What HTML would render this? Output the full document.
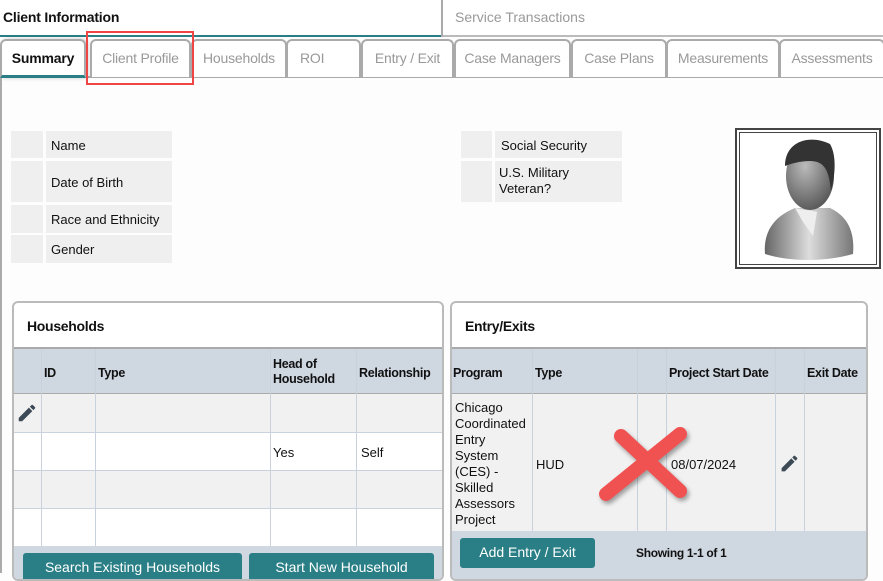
<!DOCTYPE html>
<html><head><meta charset="utf-8"><style>
*{box-sizing:border-box;margin:0;padding:0}
body{width:883px;height:573px;overflow:hidden;background:#fdfdfd;font-family:"Liberation Sans",sans-serif;position:relative;font-size:13px;color:#111}
.a{position:absolute}
.tab{position:absolute;top:39px;height:38px;border:2px solid #aaa;border-bottom:none;border-radius:6px 6px 0 0;color:#999;font-size:14px;line-height:34px;text-align:center;background:#fff;letter-spacing:-.2px}
.g{background:#efefef}
.hd{font-weight:bold;font-size:12.5px;letter-spacing:-.3px}
.btn{position:absolute;background:#2a7f86;color:#fff;font-size:14px;text-align:center;border-radius:3px}
.vl{position:absolute;width:1px;background:#c8d2dd}
</style></head><body>
<div class="a" style="left:0;top:0;width:441px;height:37px;background:#fff;border-bottom:2px solid #2a7f86"></div>
<div class="a" style="left:3px;top:9px;font-weight:bold;font-size:14px;letter-spacing:-.2px">Client Information</div>
<div class="a" style="left:441px;top:0;width:2px;height:37px;background:#aaa"></div>
<div class="a" style="left:443px;top:0;width:440px;height:37px;background:#fff;border-bottom:2px solid #bbb"></div>
<div class="a" style="left:455px;top:9px;color:#999;font-size:14px">Service Transactions</div>
<div class="a" style="left:0;top:76px;width:883px;height:2px;background:#aaa"></div>
<div class="tab" style="left:0;width:86px;color:#111;font-weight:bold;border-bottom:3px solid #2a7f86;height:39px;box-shadow:2px 0 4px rgba(0,0,0,.2)">Summary</div>
<div class="tab" style="left:90px;width:101px">Client Profile</div>
<div class="tab" style="left:191px;width:96px">Households</div>
<div class="tab" style="left:286px;width:75px;text-align:left;padding-left:12px">ROI</div>
<div class="tab" style="left:361px;width:93px">Entry / Exit</div>
<div class="tab" style="left:454px;width:117px">Case Managers</div>
<div class="tab" style="left:571px;width:96px">Case Plans</div>
<div class="tab" style="left:666px;width:114px">Measurements</div>
<div class="tab" style="left:779px;width:106px">Assessments</div>
<div class="a" style="left:86px;top:31px;width:108px;height:54px;border:2px solid #f04545"></div>
<div class="a" style="left:0;top:78px;width:2px;height:495px;background:#aaa"></div>

<div class="a g" style="left:11px;top:131px;width:32px;height:27px"></div><div class="a g" style="left:46px;top:131px;width:126px;height:27px;padding:7px 5px">Name</div>
<div class="a g" style="left:11px;top:161px;width:32px;height:41px"></div><div class="a g" style="left:46px;top:161px;width:126px;height:41px;padding:14px 5px">Date of Birth</div>
<div class="a g" style="left:11px;top:205px;width:32px;height:28px"></div><div class="a g" style="left:46px;top:205px;width:126px;height:28px;padding:7px 5px">Race and Ethnicity</div>
<div class="a g" style="left:11px;top:235px;width:32px;height:28px"></div><div class="a g" style="left:46px;top:235px;width:126px;height:28px;padding:7px 5px">Gender</div>
<div class="a g" style="left:461px;top:131px;width:31px;height:27px"></div><div class="a g" style="left:495px;top:131px;width:127px;height:27px;padding:7px 6px">Social Security</div>
<div class="a g" style="left:461px;top:161px;width:31px;height:41px"></div><div class="a g" style="left:495px;top:161px;width:127px;height:41px;padding:4px 4px;line-height:16px">U.S. Military<br>Veteran?</div>

<div class="a" style="left:735px;top:128px;width:146px;height:141px;border:2px solid #444;background:#fff"><div class="a" style="left:2px;top:2px;right:2px;bottom:2px;border:1px solid #444"></div>
<svg class="a" style="left:18px;top:6px" width="110" height="128" viewBox="0 0 110 128"><defs><radialGradient id="r" cx=".4" cy=".35" r=".7"><stop offset="0" stop-color="#bbb"/><stop offset="1" stop-color="#555"/></radialGradient><linearGradient id="b" x1="0" x2="1"><stop offset="0" stop-color="#666"/><stop offset=".5" stop-color="#ddd"/><stop offset="1" stop-color="#777"/></linearGradient></defs>
<path d="M10 118 C8 95 20 80 40 72 L75 72 C92 80 100 95 98 118 C70 126 35 126 10 118Z" fill="url(#b)"/>
<path d="M40 72 L48 86 L58 100 L62 76Z" fill="#eee"/>
<ellipse cx="55" cy="40" rx="24" ry="34" fill="url(#r)"/>
<path d="M30 30 C30 5 55 -2 75 8 C82 20 80 40 76 55 C74 35 70 25 55 25 C45 25 35 28 30 30Z" fill="#333"/></svg></div>

<!-- households -->
<div class="a" style="left:12px;top:301px;width:432px;height:280px;border:2px solid #bbb;border-radius:6px;background:#fff;overflow:hidden">
<div class="a hd" style="left:13px;top:15px;font-size:14px">Households</div>
<div class="a" style="left:0;top:44px;width:432px;height:2px;background:#aaa"></div>
<div class="a" style="left:0;top:46px;width:432px;height:45px;background:#cfd7e1;border-bottom:1px solid #aaa"></div>
<div class="a" style="left:0;top:91px;width:432px;height:38px;background:#f1f1f1"></div>
<div class="a" style="left:0;top:129px;width:432px;height:38px;background:#fff;border-top:1px solid #c8d2dd"></div>
<div class="a" style="left:0;top:167px;width:432px;height:38px;background:#f1f1f1;border-top:1px solid #c8d2dd"></div>
<div class="a" style="left:0;top:205px;width:432px;height:38px;background:#fff;border-top:1px solid #c8d2dd"></div>
<div class="a" style="left:0;top:243px;width:432px;height:40px;background:#cfd7e1"></div>
<div class="vl" style="left:27px;top:46px;height:197px"></div><div class="vl" style="left:81px;top:46px;height:197px"></div><div class="vl" style="left:256px;top:46px;height:197px"></div><div class="vl" style="left:342px;top:46px;height:197px"></div>
<div class="a hd" style="left:30px;top:63px">ID</div><div class="a hd" style="left:84px;top:63px">Type</div>
<div class="a hd" style="left:259px;top:54px;line-height:15px">Head of<br>Household</div><div class="a hd" style="left:345px;top:63px">Relationship</div>
<svg class="a" style="left:2px;top:99px" width="22" height="22" viewBox="0 0 24 24"><path d="M3 17.25V21h3.75L17.81 9.94l-3.75-3.75L3 17.25zM20.71 7.04a1 1 0 0 0 0-1.41l-2.34-2.34a1 1 0 0 0-1.41 0l-1.83 1.83 3.75 3.75 1.83-1.83z" fill="#3d4a55"/></svg>
<div class="a" style="left:259px;top:142px">Yes</div><div class="a" style="left:347px;top:142px">Self</div>
<div class="btn" style="left:9px;top:250px;width:219px;height:30px;line-height:28px">Search Existing Households</div>
<div class="btn" style="left:235px;top:250px;width:185px;height:30px;line-height:28px">Start New Household</div>
</div>

<!-- entry exits -->
<div class="a" style="left:450px;top:301px;width:418px;height:280px;border:2px solid #bbb;border-radius:6px;background:#fff;overflow:hidden">
<div class="a hd" style="left:13px;top:15px;font-size:14px">Entry/Exits</div>
<div class="a" style="left:0;top:44px;width:418px;height:2px;background:#aaa"></div>
<div class="a" style="left:0;top:46px;width:418px;height:45px;background:#cfd7e1;border-bottom:1px solid #aaa"></div>
<div class="a" style="left:0;top:91px;width:418px;height:137px;background:#f1f1f1"></div>
<div class="a" style="left:0;top:228px;width:418px;height:50px;background:#cfd7e1"></div>
<div class="vl" style="left:80px;top:46px;height:182px"></div><div class="vl" style="left:185px;top:46px;height:182px"></div><div class="vl" style="left:214px;top:46px;height:182px"></div><div class="vl" style="left:323px;top:46px;height:182px"></div><div class="vl" style="left:352px;top:46px;height:182px"></div>
<div class="a hd" style="left:1px;top:63px">Program</div><div class="a hd" style="left:83px;top:63px">Type</div><div class="a hd" style="left:217px;top:63px">Project Start Date</div><div class="a hd" style="left:355px;top:63px">Exit Date</div>
<div class="a" style="left:3px;top:97px;line-height:16px">Chicago<br>Coordinated<br>Entry<br>System<br>(CES) -<br>Skilled<br>Assessors<br>Project</div>
<div class="a" style="left:84px;top:154px">HUD</div><div class="a" style="left:219px;top:154px">08/07/2024</div>
<svg class="a" style="left:327px;top:150px" width="21" height="21" viewBox="0 0 24 24"><path d="M3 17.25V21h3.75L17.81 9.94l-3.75-3.75L3 17.25zM20.71 7.04a1 1 0 0 0 0-1.41l-2.34-2.34a1 1 0 0 0-1.41 0l-1.83 1.83 3.75 3.75 1.83-1.83z" fill="#3d4a55"/></svg>
<div class="btn" style="left:8px;top:235px;width:135px;height:30px;line-height:29px">Add Entry / Exit</div>
<div class="a hd" style="left:184px;top:243px;font-size:12px">Showing 1-1 of 1</div>
</div>
<svg class="a" style="left:0;top:0" width="883" height="573"><g stroke="#f05252" stroke-width="14" stroke-linecap="round" style="filter:drop-shadow(2px 3px 2px rgba(0,0,0,.35))"><line x1="606" y1="494" x2="680" y2="434"/><line x1="621" y1="436" x2="680" y2="491"/></g></svg>
</body></html>
